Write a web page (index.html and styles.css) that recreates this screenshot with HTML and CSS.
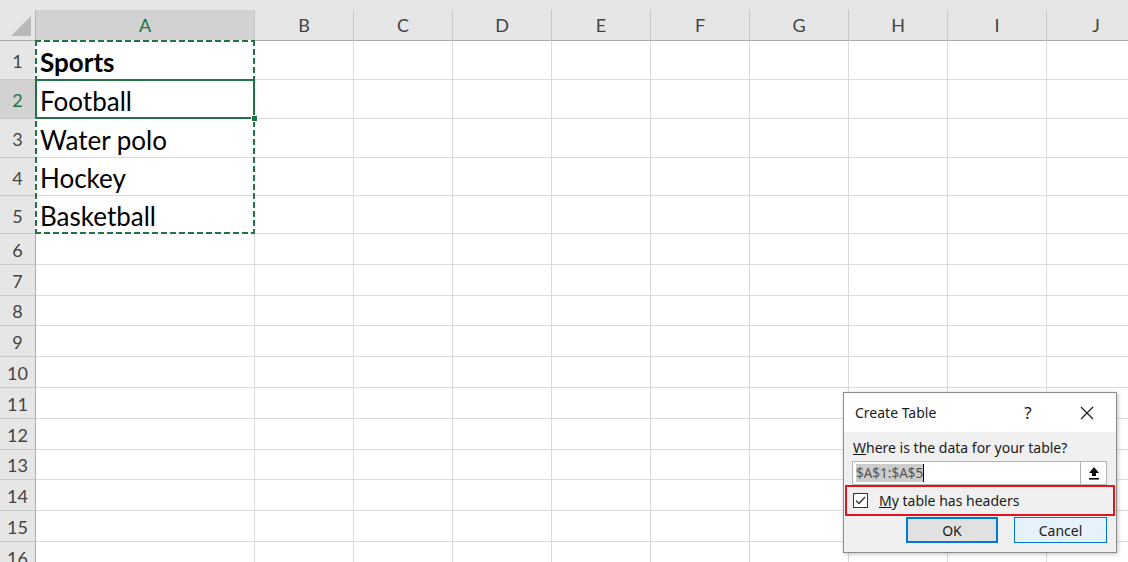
FILE: index.html
```html
<!DOCTYPE html>
<html lang="en">
  <head>
    <meta charset="UTF-8" />
    <meta name="viewport" content="width=device-width, initial-scale=1.0" />
    <title>Create Table</title>
    <link rel="stylesheet" href="styles.css">
  </head>
  <body>
    <div class="page">
      <div class="topbar"></div>
      <div class="sheet">
        <div class="corner">
          <svg width="20" height="20" viewBox="0 0 20 20"><polygon points="20,0 20,20 0,20" fill="#b9b9b9"/></svg>
        </div>
        <div class="ch sel">A</div><div class="ch">B</div><div class="ch">C</div><div class="ch">D</div><div class="ch">E</div><div class="ch">F</div><div class="ch">G</div><div class="ch">H</div><div class="ch">I</div><div class="ch">J</div>

        <div class="rh">1</div><div class="c b">Sports</div><div></div><div></div><div></div><div></div><div></div><div></div><div></div><div></div><div></div>
        <div class="rh sel">2</div><div class="c">Football</div><div></div><div></div><div></div><div></div><div></div><div></div><div></div><div></div><div></div>
        <div class="rh">3</div><div class="c">Water polo</div><div></div><div></div><div></div><div></div><div></div><div></div><div></div><div></div><div></div>
        <div class="rh">4</div><div class="c">Hockey</div><div></div><div></div><div></div><div></div><div></div><div></div><div></div><div></div><div></div>
        <div class="rh">5</div><div class="c">Basketball</div><div></div><div></div><div></div><div></div><div></div><div></div><div></div><div></div><div></div>
        <div class="rh">6</div><div></div><div></div><div></div><div></div><div></div><div></div><div></div><div></div><div></div><div></div>
        <div class="rh">7</div><div></div><div></div><div></div><div></div><div></div><div></div><div></div><div></div><div></div><div></div>
        <div class="rh">8</div><div></div><div></div><div></div><div></div><div></div><div></div><div></div><div></div><div></div><div></div>
        <div class="rh">9</div><div></div><div></div><div></div><div></div><div></div><div></div><div></div><div></div><div></div><div></div>
        <div class="rh">10</div><div></div><div></div><div></div><div></div><div></div><div></div><div></div><div></div><div></div><div></div>
        <div class="rh">11</div><div></div><div></div><div></div><div></div><div></div><div></div><div></div><div></div><div></div><div></div>
        <div class="rh">12</div><div></div><div></div><div></div><div></div><div></div><div></div><div></div><div></div><div></div><div></div>
        <div class="rh">13</div><div></div><div></div><div></div><div></div><div></div><div></div><div></div><div></div><div></div><div></div>
        <div class="rh">14</div><div></div><div></div><div></div><div></div><div></div><div></div><div></div><div></div><div></div><div></div>
        <div class="rh">15</div><div></div><div></div><div></div><div></div><div></div><div></div><div></div><div></div><div></div><div></div>
        <div class="rh">16</div><div></div><div></div><div></div><div></div><div></div><div></div><div></div><div></div><div></div><div></div>
      </div>

      <!-- copy marquee around A1:A5 and the active cell A2 -->
      <div class="marquee"></div>
      <div class="active"></div>

      <div class="dialog">
        <div class="dlg-title">
          <span class="dlg-name">Create Table</span>
          <span class="dlg-help">?</span>
          <span class="dlg-close">
            <svg width="14" height="14" viewBox="0 0 14 14"><path d="M1 1 L13 13 M13 1 L1 13" stroke="#1a1a1a" stroke-width="1.2" fill="none"/></svg>
          </span>
        </div>
        <div class="dlg-body">
          <div class="dlg-label"><u>W</u>here is the data for your table?</div>
          <div class="range">
            <div class="range-text"><span class="range-sel">$A$1:$A$5</span><span class="caret"></span></div>
            <div class="range-btn">
              <svg width="12" height="14" viewBox="0 0 12 14"><path d="M6 1 L11 7 L8 7 L8 10 L4 10 L4 7 L1 7 Z" fill="#111"/><rect x="1" y="12" width="10" height="1.6" fill="#111"/></svg>
            </div>
          </div>
          <div class="headers-row">
            <span class="check">
              <svg width="13" height="13" viewBox="0 0 13 13"><polyline points="2,6.5 5,9.5 11,3" stroke="#333" stroke-width="1.3" fill="none"/></svg>
            </span>
            <span><u>M</u>y table has headers</span>
          </div>
          <div class="buttons">
            <div class="btn btn-ok">OK</div>
            <div class="btn btn-cancel">Cancel</div>
          </div>
        </div>
      </div>
    </div>
  </body>
</html>
```
FILE: styles.css
```css
body {
  margin: 0;
  background: #fff;
  font-family: Lato, "Liberation Sans", sans-serif;
}

.page {
  position: relative;
  height: 562px;
  overflow: hidden;
}

.topbar {
  height: 10px;
  background: #e6e6e6;
}

.sheet {
  display: grid;
  grid-template-columns: 36px 219px repeat(9, 99px);
  grid-template-rows: 31px 39px 39px 39px 38px 38px repeat(11, 30.8px);
}

.sheet > div {
  box-sizing: border-box;
  border-right: 1px solid #dadada;
  border-bottom: 1px solid #dadada;
}

.sheet > .corner {
  background: #e6e6e6;
  border-right-color: #b4b4b4;
  border-bottom-color: #ababab;
  display: flex;
  align-items: flex-end;
  justify-content: flex-end;
  padding: 0 4px 4px 0;
}

.corner svg {
  display: block;
}

.sheet > .ch {
  background: #e6e6e6;
  color: #444;
  font-size: 18px;
  display: flex;
  align-items: center;
  justify-content: center;
  border-right-color: #c8c8c8;
  border-bottom-color: #ababab;
}

.sheet > .rh {
  background: #e6e6e6;
  color: #444;
  font-size: 18px;
  display: flex;
  align-items: center;
  justify-content: center;
  padding-top: 2px;
  border-right-color: #ababab;
  border-bottom-color: #c8c8c8;
}

.sheet > .sel {
  background: #d2d2d2;
  color: #217346;
}

.c {
  font-size: 26px;
  display: flex;
  align-items: center;
  padding: 3px 0 0 4px;
  color: #000;
  white-space: nowrap;
}

.b {
  font-weight: bold;
}

.marquee {
  position: absolute;
  left: 35px;
  top: 40px;
  width: 220px;
  height: 194px;
  background:
    repeating-linear-gradient(90deg, #217346 0 6px, #fff 6px 9px) top / 100% 2px no-repeat,
    repeating-linear-gradient(90deg, #217346 0 6px, #fff 6px 9px) bottom / 100% 2px no-repeat,
    repeating-linear-gradient(180deg, #217346 0 6px, #fff 6px 9px) left / 2px 100% no-repeat,
    repeating-linear-gradient(180deg, #217346 0 6px, #fff 6px 9px) right / 2px 100% no-repeat;
}

.active {
  position: absolute;
  left: 35px;
  top: 79px;
  width: 220px;
  height: 40px;
  box-sizing: border-box;
  border: 2px solid #217346;
}

.active::after {
  content: "";
  position: absolute;
  right: -5px;
  bottom: -5px;
  width: 5px;
  height: 5px;
  background: #217346;
  border: 1px solid #fff;
}

/* dialog */
.dialog {
  position: absolute;
  left: 843px;
  top: 392px;
  width: 274px;
  height: 161px;
  box-sizing: border-box;
  border: 1px solid #8c8c8c;
  background: #f0f0f0;
  box-shadow: 1px 1px 4px rgba(0, 0, 0, 0.25);
  font-family: "Noto Sans", "Open Sans", sans-serif;
  font-size: 14px;
  color: #1a1a1a;
}

.dlg-title {
  height: 39px;
  background: #fff;
  display: flex;
  align-items: center;
  padding-left: 11px;
}

.dlg-name {
  flex: 1;
}

.dlg-help {
  width: 20px;
  text-align: center;
  font-size: 17px;
  margin-right: 42px;
}

.dlg-close {
  width: 14px;
  height: 14px;
  margin-right: 22px;
}

.dlg-close svg {
  display: block;
}

.dlg-body {
  padding: 7px 9px 0 8px;
}

.dlg-label {
  line-height: 18px;
  padding-left: 1px;
  margin-bottom: 4px;
}

.range {
  display: flex;
  height: 24px;
  box-sizing: border-box;
  border: 1px solid #b4b4b4;
  background: #fff;
}

.range-text {
  flex: 1;
  display: flex;
  align-items: center;
  padding-left: 3px;
  font-size: 13.5px;
}

.range-sel {
  background: #cccccc;
  color: #555;
  line-height: 18px;
}

.caret {
  width: 1px;
  height: 18px;
  background: #000;
}

.range-btn {
  width: 25px;
  border-left: 1px solid #b4b4b4;
  display: flex;
  align-items: center;
  justify-content: center;
}

.headers-row {
  margin: 0 -8px 0 -7px;
  height: 31px;
  box-sizing: border-box;
  border: 2px solid #e0161e;
  display: flex;
  align-items: center;
  gap: 11px;
  padding-left: 6px;
}

.check {
  width: 15px;
  height: 15px;
  box-sizing: border-box;
  border: 1px solid #333;
  background: #fff;
  display: flex;
  align-items: center;
  justify-content: center;
}

.buttons {
  display: flex;
  justify-content: flex-end;
  gap: 16px;
  margin-top: 1px;
}

.btn {
  height: 26px;
  box-sizing: border-box;
  display: flex;
  align-items: center;
  justify-content: center;
}

.btn-ok {
  width: 92px;
  border: 2px solid #0078d7;
  background: #e1e1e1;
}

.btn-cancel {
  width: 93px;
  border: 1px solid #0078d7;
  background: #e5f1fb;
}
```
